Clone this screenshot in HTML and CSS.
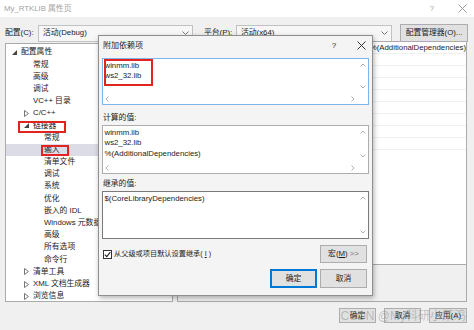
FILE: index.html
```html
<!DOCTYPE html>
<html lang="zh-CN">

<head>
    <meta charset="UTF-8">
    <meta name="viewport" content="width=device-width, initial-scale=1.0">
    <title>My_RTKLIB 属性页</title>
    <link rel="stylesheet" href="styles.css">
</head>

<body>
    <div class="win">
        <!-- 标题栏 -->
        <div class="titlebar">
            <span class="ttl">My_RTKLIB 属性页</span>
            <span class="ctl">?</span>
            <span class="ctl"><svg width="9" height="9" viewBox="0 0 9 9"><path d="M0.5 0.5 8.5 8.5M8.5 0.5 0.5 8.5" stroke="#9a9a9a" stroke-width="1"/></svg></span>
        </div>

        <!-- 配置 / 平台 -->
        <div class="cfg">
            <span class="lbl">配置(C):</span>
            <div class="combo c1"><span>活动(Debug)</span><svg width="7" height="4" viewBox="0 0 7 4"><path d="M0.5 0.5 3.5 3.5 6.5 0.5" fill="none" stroke="#777"/></svg></div>
            <span class="lbl lbl2">平台(P):</span>
            <div class="combo c2"><span>活动(x64)</span><svg width="7" height="4" viewBox="0 0 7 4"><path d="M0.5 0.5 3.5 3.5 6.5 0.5" fill="none" stroke="#777"/></svg></div>
            <button class="btn mgr">配置管理器(O)...</button>
        </div>

        <div class="main">
            <!-- 左侧树 -->
            <div class="tree">
                <div class="ti l0"><i class="ar"><svg width="5" height="5" viewBox="0 0 5 5"><path d="M5 0 5 5 0 5Z" fill="#444"/></svg></i>配置属性</div>
                <div class="ti l1">常规</div>
                <div class="ti l1">高级</div>
                <div class="ti l1">调试</div>
                <div class="ti l1">VC++ 目录</div>
                <div class="ti l1a"><i class="ar"><svg width="5" height="7" viewBox="0 0 5 7"><path d="M0.5 0.5 4.5 3.5 0.5 6.5Z" fill="none" stroke="#777"/></svg></i>C/C++</div>
                <div class="ti l1a"><span class="mark mk-link"><i class="ar"><svg width="5" height="5" viewBox="0 0 5 5"><path d="M5 0 5 5 0 5Z" fill="#444"/></svg></i>链接器</span></div>
                <div class="ti l2">常规</div>
                <div class="ti l2 sel"><span class="mark mk-in">输入</span></div>
                <div class="ti l2">清单文件</div>
                <div class="ti l2">调试</div>
                <div class="ti l2">系统</div>
                <div class="ti l2">优化</div>
                <div class="ti l2">嵌入的 IDL</div>
                <div class="ti l2">Windows 元数据</div>
                <div class="ti l2">高级</div>
                <div class="ti l2">所有选项</div>
                <div class="ti l2">命令行</div>
                <div class="ti l1a"><i class="ar"><svg width="5" height="7" viewBox="0 0 5 7"><path d="M0.5 0.5 4.5 3.5 0.5 6.5Z" fill="none" stroke="#777"/></svg></i>清单工具</div>
                <div class="ti l1a"><i class="ar"><svg width="5" height="7" viewBox="0 0 5 7"><path d="M0.5 0.5 4.5 3.5 0.5 6.5Z" fill="none" stroke="#777"/></svg></i>XML 文档生成器</div>
                <div class="ti l1a"><i class="ar"><svg width="5" height="7" viewBox="0 0 5 7"><path d="M0.5 0.5 4.5 3.5 0.5 6.5Z" fill="none" stroke="#777"/></svg></i>浏览信息</div>
            </div>

            <!-- 右侧属性表 -->
            <div class="right">
                <div class="grid">
                    <div class="row"><span class="name">附加依赖项</span><span class="val">%(AdditionalDependencies)</span></div>
                    <div class="row"><span class="name">忽略所有默认库</span><span class="val"></span></div>
                    <div class="row"><span class="name">忽略特定默认库</span><span class="val"></span></div>
                    <div class="row"><span class="name">模块定义文件</span><span class="val"></span></div>
                    <div class="row"><span class="name">将模块添加到程序集</span><span class="val"></span></div>
                    <div class="row"><span class="name">嵌入托管资源文件</span><span class="val"></span></div>
                    <div class="row"><span class="name">强制符号引用</span><span class="val"></span></div>
                    <div class="row"><span class="name">延迟加载的 DLL</span><span class="val"></span></div>
                    <div class="row"><span class="name">程序集链接资源</span><span class="val"></span></div>
                </div>
                <div class="desc"></div>
            </div>
        </div>

        <div class="foot">
            <button class="btn">确定</button>
            <button class="btn">取消</button>
            <button class="btn">应用(A)</button>
        </div>

        <!-- 附加依赖项 对话框 -->
        <div class="dlg">
            <div class="dlg-title">
                <span class="ttl">附加依赖项</span>
                <span class="ctl">?</span>
                <span class="ctl"><svg width="9" height="9" viewBox="0 0 9 9"><path d="M0.5 0.5 8.5 8.5M8.5 0.5 0.5 8.5" stroke="#333" stroke-width="1"/></svg></span>
            </div>
            <div class="dlg-body">
                <div class="box edit">
                    <div class="txt"><div class="mark mk-box">winmm.lib<br>ws2_32.lib</div></div>
                    <div class="vs">
                        <svg width="6" height="4" viewBox="0 0 6 4"><path d="M0.5 3.5 3 1 5.5 3.5" fill="none" stroke="#b0b0b0"/></svg>
                        <svg width="6" height="4" viewBox="0 0 6 4"><path d="M0.5 0.5 3 3 5.5 0.5" fill="none" stroke="#b0b0b0"/></svg>
                    </div>
                    <div class="hs">
                        <svg width="4" height="6" viewBox="0 0 4 6"><path d="M3.5 0.5 1 3 3.5 5.5" fill="none" stroke="#b0b0b0"/></svg>
                        <svg width="4" height="6" viewBox="0 0 4 6"><path d="M0.5 0.5 3 3 0.5 5.5" fill="none" stroke="#b0b0b0"/></svg>
                    </div>
                </div>

                <div class="cap">计算的值:</div>
                <div class="box calc">
                    <div class="txt">winmm.lib<br>ws2_32.lib<br>%(AdditionalDependencies)</div>
                    <div class="vs">
                        <svg width="6" height="4" viewBox="0 0 6 4"><path d="M0.5 3.5 3 1 5.5 3.5" fill="none" stroke="#b0b0b0"/></svg>
                        <svg width="6" height="4" viewBox="0 0 6 4"><path d="M0.5 0.5 3 3 5.5 0.5" fill="none" stroke="#b0b0b0"/></svg>
                    </div>
                    <div class="hs">
                        <svg width="4" height="6" viewBox="0 0 4 6"><path d="M3.5 0.5 1 3 3.5 5.5" fill="none" stroke="#b0b0b0"/></svg>
                        <svg width="4" height="6" viewBox="0 0 4 6"><path d="M0.5 0.5 3 3 0.5 5.5" fill="none" stroke="#b0b0b0"/></svg>
                    </div>
                </div>

                <div class="cap">继承的值:</div>
                <div class="box inh">
                    <div class="txt">$(CoreLibraryDependencies)</div>
                    <div class="vs">
                        <svg width="6" height="4" viewBox="0 0 6 4"><path d="M0.5 3.5 3 1 5.5 3.5" fill="none" stroke="#b0b0b0"/></svg>
                        <svg width="6" height="4" viewBox="0 0 6 4"><path d="M0.5 0.5 3 3 5.5 0.5" fill="none" stroke="#b0b0b0"/></svg>
                    </div>
                </div>

                <div class="opt">
                    <label class="chk"><span class="cb"><svg width="7" height="7" viewBox="0 0 7 7"><path d="M0.8 3.6 2.8 5.6 6.3 1.2" fill="none" stroke="#222" stroke-width="1.1"/></svg></span>从父级或项目默认设置继承(<u>I</u>)</label>
                    <button class="btn macro">宏(<u>M</u>) <span class="gt">&gt;&gt;</span></button>
                </div>

                <div class="acts">
                    <button class="btn ok">确定</button>
                    <button class="btn">取消</button>
                </div>
            </div>
        </div>

        <div class="wm">CSDN @My科研小菜鸡</div>
    </div>
</body>

</html>
```

FILE: styles.css
```css
* {
    margin: 0;
    padding: 0;
    box-sizing: border-box;
}

body {
    width: 474px;
    height: 330px;
    overflow: hidden;
    background: #f0f0f0;
    font: 7.8px/12px "Liberation Sans", "Noto Sans CJK SC", sans-serif;
    color: #1b1b1b;
}

.win {
    position: relative;
    height: 330px;
}

.btn {
    font: inherit;
    color: inherit;
    background: #e1e1e1;
    border: 1px solid #adadad;
}

/* 标题栏 */
.titlebar {
    display: flex;
    align-items: center;
    height: 17px;
    padding: 0 2px 0 4px;
    background: #fff;
    color: #a3a3a3;
}

.titlebar .ttl {
    flex: 1;
}

.titlebar .ctl {
    width: 20px;
    display: flex;
    justify-content: center;
}

.titlebar .ctl + .ctl {
    margin-left: 10px;
}

/* 配置行 */
.cfg {
    display: flex;
    align-items: center;
    height: 18px;
    margin-top: 7px;
    padding-left: 5px;
}

.cfg .lbl {
    width: 33px;
}

.cfg .lbl2 {
    width: 32px;
    margin-left: 11px;
}

.combo {
    display: flex;
    align-items: center;
    justify-content: space-between;
    height: 17px;
    padding: 0 3px 0 4px;
    background: #f7f7f7;
    border: 1px solid #c2c2c2;
}

.c1 {
    width: 155px;
}

.c2 {
    width: 156px;
}

.mgr {
    width: 68px;
    height: 18px;
    margin-left: 8px;
}

/* 主体 */
.main {
    display: flex;
    gap: 4px;
    height: 259px;
    margin-top: 1px;
    padding: 0 7px 0 5px;
}

.tree {
    width: 170px;
    padding-top: 2.4px;
    background: #fff;
    border: 1px solid #ababab;
}

.ti {
    display: flex;
    align-items: center;
    height: 12.2px;
    line-height: 12.2px;
    white-space: nowrap;
}

.ar {
    display: flex;
    align-items: center;
    width: 9px;
}

.l0 {
    padding-left: 6px;
}

.l1a {
    padding-left: 18px;
}

.l1 {
    padding-left: 27px;
}

.l2 {
    padding-left: 38px;
}

.sel {
    background: #dcdce6;
}

/* 红框标注 */
.mark {
    position: relative;
    display: flex;
    align-items: center;
}

.mark::after {
    content: "";
    position: absolute;
    border: 2px solid #e2231f;
}

.mk-link::after {
    top: 1px;
    bottom: -1px;
    left: -6px;
    right: -10px;
}

.mk-in::after {
    top: 1px;
    bottom: 0;
    left: -3px;
    right: -9px;
}

.mk-box {
    display: block;
    width: fit-content;
}

.mk-box::after {
    top: -2px;
    bottom: -4px;
    left: -1px;
    right: -12px;
}

.right {
    flex: 1;
    display: flex;
    flex-direction: column;
    margin-top: -2px;
}

.grid {
    flex: 1;
    overflow: hidden;
    background: #fff;
    border: 1px solid #ababab;
}

.row {
    display: flex;
    height: 12px;
    line-height: 11px;
    border-bottom: 1px solid #f0f0f0;
    white-space: nowrap;
}

.name {
    width: 190px;
    flex-shrink: 0;
    padding-left: 14px;
}

.val {
    padding-left: 2px;
}

.desc {
    height: 37px;
    border: 1px solid #ababab;
    border-top: 0;
}

.foot {
    display: flex;
    justify-content: flex-end;
    gap: 8px;
    padding: 6px 7px 0 0;
}

.foot .btn {
    width: 37px;
    height: 15px;
}

.foot .btn:last-child {
    width: 38px;
}

/* 对话框 */
.dlg {
    position: absolute;
    left: 98px;
    top: 35px;
    width: 275px;
    height: 261px;
    background: #f4f4f4;
    border: 1px solid #8f8f8f;
    box-shadow: 1px 2px 5px rgba(0, 0, 0, 0.3);
}

.dlg-title {
    display: flex;
    align-items: center;
    height: 19px;
    padding: 0 3px 0 4px;
    font-size: 8px;
}

.dlg-title .ttl {
    flex: 1;
}

.dlg-title .ctl {
    width: 16px;
    display: flex;
    justify-content: center;
}

.dlg-title .ctl + .ctl {
    margin-left: 11px;
}

.dlg-body {
    padding: 0 3px;
}

.box {
    display: grid;
    grid-template-columns: 1fr 11px;
    grid-template-rows: 1fr 11px;
    background: #fff;
    border: 1px solid #adadad;
}

.edit {
    height: 47px;
    margin-top: 3px;
    border-color: #7eb4ea;
}

.calc {
    height: 49px;
}

.inh {
    height: 48px;
    grid-template-rows: 1fr;
    border-color: #7a7a7a;
}

.txt {
    padding: 1.75px 1.5px;
    line-height: 10.5px;
    white-space: nowrap;
}

.vs {
    display: flex;
    flex-direction: column;
    justify-content: space-between;
    align-items: center;
    padding: 4px 0;
}

.hs {
    display: flex;
    justify-content: space-between;
    align-items: center;
    padding: 0 2px;
}

.cap {
    height: 14px;
    line-height: 14px;
    margin-top: 6px;
    padding-left: 1px;
}

.calc + .cap {
    margin-top: 3px;
}

.opt {
    display: flex;
    align-items: center;
    justify-content: space-between;
    height: 18px;
    margin-top: 6px;
    padding: 0 2px 0 1px;
}

.chk {
    display: flex;
    align-items: center;
    gap: 2px;
    font-size: 7.2px;
}

.cb {
    display: flex;
    align-items: center;
    justify-content: center;
    width: 9px;
    height: 9px;
    background: #fff;
    border: 1px solid #333;
}

.macro {
    width: 47px;
    height: 18px;
}

.gt {
    color: #777;
}

.acts {
    display: flex;
    justify-content: flex-end;
    gap: 3px;
    height: 19px;
    margin-top: 6px;
    padding-right: 2px;
}

.acts .btn {
    width: 47px;
    height: 19px;
}

.acts .ok {
    border-color: #0078d7;
    box-shadow: inset 0 0 0 1px #0078d7;
}

.wm {
    position: absolute;
    right: 8px;
    top: 309px;
    font-size: 12px;
    line-height: 14px;
    color: rgba(130, 130, 130, 0.45);
    white-space: nowrap;
}
```
